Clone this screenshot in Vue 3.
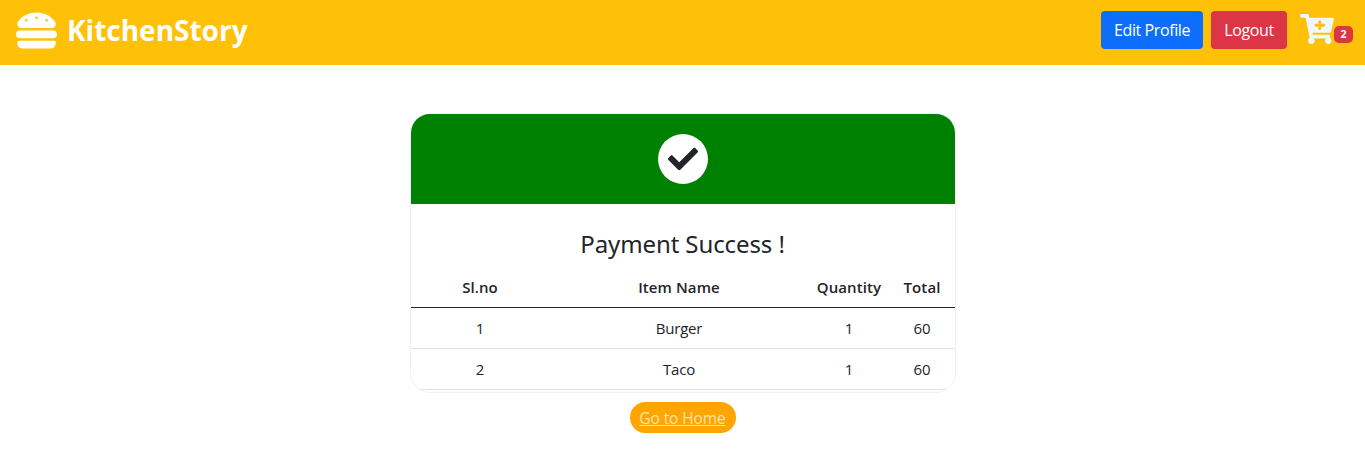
<template>
  <nav class="navbar">
    <div class="brand">
      <svg class="burger" viewBox="0 0 512 512" fill="currentColor">
        <path d="M464 256H48a48 48 0 0 0 0 96h416a48 48 0 0 0 0-96zm16 128H32a16 16 0 0 0-16 16v16a64 64 0 0 0 64 64h352a64 64 0 0 0 64-64v-16a16 16 0 0 0-16-16zM58.64 224h394.72c34.57 0 54.62-43.9 34.82-75.88C448 83.2 359.55 32.1 256 32c-103.54.1-192 51.2-232.18 116.11C4 180.09 24.07 224 58.64 224zM384 112a16 16 0 1 1-16 16 16 16 0 0 1 16-16zM256 80a16 16 0 1 1-16 16 16 16 0 0 1 16-16zm-128 32a16 16 0 1 1-16 16 16 16 0 0 1 16-16z" />
      </svg>
      <span class="brand-name">KitchenStory</span>
    </div>
    <div class="actions">
      <button class="btn btn-blue">Edit Profile</button>
      <button class="btn btn-red">Logout</button>
      <div class="cart">
        <svg class="cart-icon" viewBox="0 0 576 512" fill="currentColor">
          <path d="M504.717 320H211.572l6.545 32h268.418c15.401 0 26.816 14.301 23.403 29.319l-5.517 24.276C523.112 414.668 536 433.828 536 456c0 31.202-25.519 56.587-56.824 55.994-29.823-.565-54.348-24.681-55.151-54.496-.439-16.288 6.085-31.049 16.762-41.498H231.213c10.338 10.117 16.787 24.22 16.787 39.84 0 31.813-26.528 57.431-58.673 55.938-28.54-1.325-51.751-24.385-53.251-52.917-1.158-22.034 10.436-41.455 28.051-51.586L93.883 64H24C10.745 64 0 53.255 0 40V24C0 10.745 10.745 0 24 0h102.529c11.401 0 21.228 8.021 23.513 19.19L159.208 64H551.99c15.401 0 26.816 14.301 23.403 29.319l-47.273 208C525.637 312.246 515.923 320 504.717 320zM408 168h-48v-40c0-8.837-7.163-16-16-16h-16c-8.837 0-16 7.163-16 16v40h-48c-8.837 0-16 7.163-16 16v16c0 8.837 7.163 16 16 16h48v40c0 8.837 7.163 16 16 16h16c8.837 0 16-7.163 16-16v-40h48c8.837 0 16-7.163 16-16v-16c0-8.837-7.163-16-16-16z" />
        </svg>
        <span class="badge">{{ items.length }}</span>
      </div>
    </div>
  </nav>

  <main class="page">
    <section class="card">
      <div class="card-head">
        <div class="tick">
          <svg viewBox="0 0 512 512" fill="currentColor">
            <path d="M173.898 439.404l-166.4-166.4c-9.997-9.997-9.997-26.206 0-36.204l36.203-36.204c9.997-9.998 26.207-9.998 36.204 0L192 312.69 432.095 72.596c9.997-9.997 26.207-9.997 36.204 0l36.203 36.204c9.997 9.997 9.997 26.206 0 36.204l-294.4 294.401c-9.998 9.997-26.207 9.997-36.204-.001z" />
          </svg>
        </div>
      </div>
      <h2 class="title">Payment Success !</h2>
      <table class="items">
        <thead>
          <tr>
            <th class="c-no">Sl.no</th>
            <th class="c-name">Item Name</th>
            <th class="c-qty">Quantity</th>
            <th class="c-total">Total</th>
          </tr>
        </thead>
        <tbody>
          <tr v-for="(item, i) in items" :key="item.name">
            <td>{{ i + 1 }}</td>
            <td>{{ item.name }}</td>
            <td>{{ item.qty }}</td>
            <td>{{ item.total }}</td>
          </tr>
        </tbody>
      </table>
    </section>
    <a class="home-link" href="#">Go to Home</a>
  </main>
</template>

<script setup>
const items = [
  { name: 'Burger', qty: 1, total: 60 },
  { name: 'Taco', qty: 1, total: 60 },
];
</script>

<style>
body {
  background: #fff;
}
</style>

<style scoped>
.navbar {
  height: 65px;
  box-sizing: border-box;
  background: #ffc107;
  display: flex;
  align-items: center;
  justify-content: space-between;
  padding: 0 12px 5px 16px;
  font-family: "Open Sans", "Noto Sans", sans-serif;
}

.brand {
  display: flex;
  align-items: center;
  gap: 10px;
  color: #fff;
}

.burger {
  width: 41px;
  height: 41px;
}

.brand-name {
  font-size: 28px;
  font-weight: 700;
}

.actions {
  display: flex;
  align-items: center;
  gap: 8px;
}

.btn {
  height: 38px;
  padding: 0 12px;
  border: 1px solid transparent;
  border-radius: 4px;
  color: #fff;
  font-family: inherit;
  font-size: 16px;
  letter-spacing: -0.4px;
}

.btn-blue {
  width: 102px;
  background: #0d6efd;
}

.btn-red {
  width: 76px;
  background: #dc3545;
}

.cart {
  position: relative;
  width: 53px;
  height: 38px;
  margin-left: 5px;
  color: #f0f8ff;
}

.cart-icon {
  width: 34px;
  height: 30px;
  margin-top: 3px;
  display: block;
}

.badge {
  position: absolute;
  left: 34px;
  top: 15px;
  width: 19px;
  height: 17px;
  border-radius: 5px;
  background: #dc3545;
  color: #fff;
  font-size: 10.5px;
  font-weight: 700;
  line-height: 17px;
  text-align: center;
}

.page {
  display: flex;
  flex-direction: column;
  align-items: center;
  padding-top: 48px;
  font-family: "Open Sans", "Noto Sans", sans-serif;
  color: #212529;
}

.card {
  width: 546px;
  height: 280px;
  box-sizing: border-box;
  border: 1px solid #f1f2f4;
  border-radius: 20px;
  overflow: hidden;
  background: #fff;
}

.card-head {
  height: 90px;
  background: #008000;
  display: flex;
  align-items: center;
  justify-content: center;
}

.tick {
  width: 50px;
  height: 50px;
  border-radius: 50%;
  background: #fff;
  display: flex;
  align-items: center;
  justify-content: center;
}

.tick svg {
  width: 30px;
  height: 30px;
}

.title {
  margin: 25px 0 8px;
  font-family: "Noto Sans", sans-serif;
  font-size: 24px;
  line-height: 29px;
  font-weight: 450;
  text-align: center;
  letter-spacing: -0.1px;
}

.items {
  width: 100%;
  border-collapse: collapse;
  table-layout: fixed;
  font-size: 15px;
  text-align: center;
}

.items th {
  height: 41px;
  padding: 9px 0 7px;
  box-sizing: border-box;
  font-weight: 650;
  letter-spacing: 0.1px;
  border-bottom: 1px solid #212529;
}

.items td {
  height: 41px;
  padding: 8px 0;
  box-sizing: border-box;
  border-bottom: 1px solid #dee2e6;
  letter-spacing: -0.2px;
}

.c-no {
  width: 139px;
}

.c-name {
  width: 259px;
}

.c-qty {
  width: 81px;
}

.home-link {
  margin-top: 9px;
  height: 31px;
  width: 106px;
  border-radius: 16px;
  background: #ffa500;
  color: #ffe3ae;
  font-size: 15.5px;
  line-height: 33px;
  text-align: center;
  letter-spacing: -0.1px;
}
</style>
